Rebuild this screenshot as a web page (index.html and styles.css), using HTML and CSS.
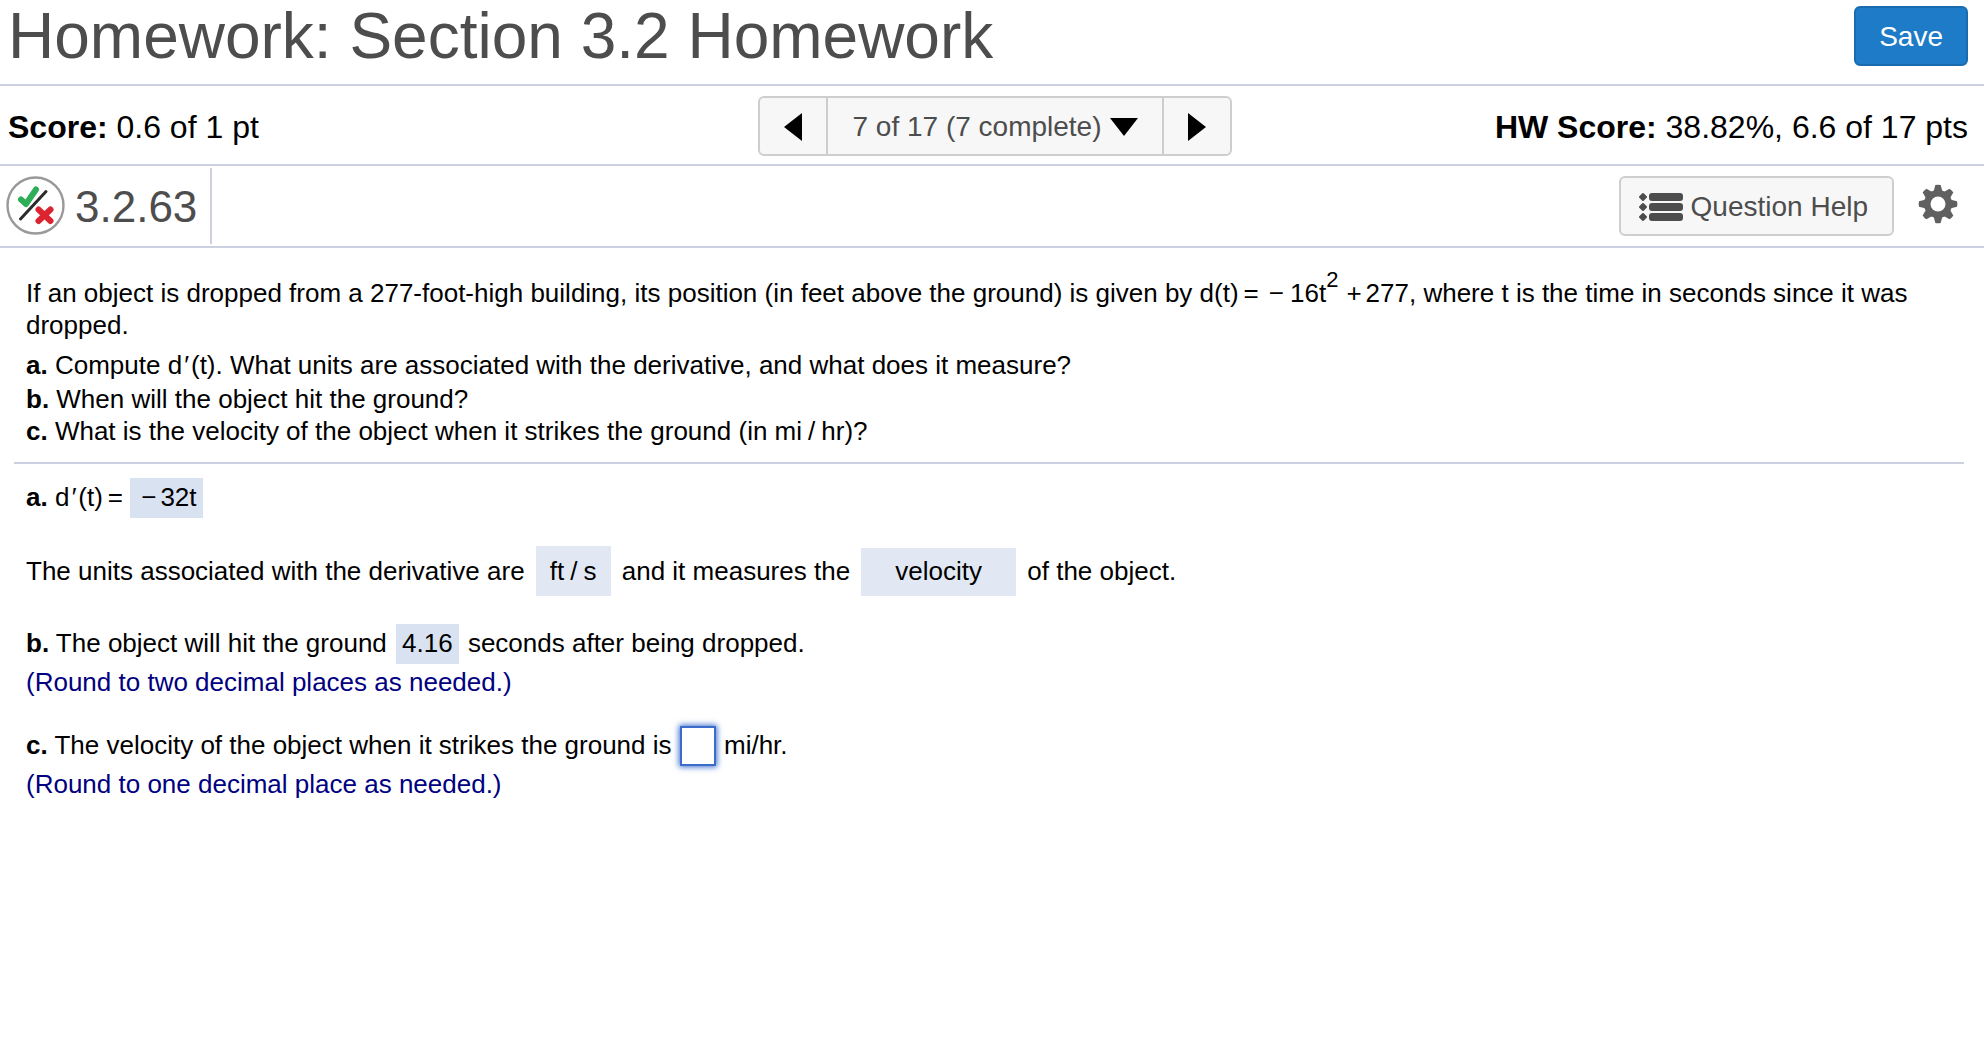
FILE: index.html
```html
<!DOCTYPE html>
<html lang="en">
<head>
<meta charset="utf-8">
<title>Homework: Section 3.2 Homework</title>
<link rel="stylesheet" href="styles.css">
</head>
<body>
<header class="title-bar">
  <h1 class="title">Homework: Section 3.2 Homework</h1>
  <button class="btn btn-save" type="button">Save</button>
</header>

<section class="score-bar">
  <div class="score"><b>Score:</b> 0.6 of 1 pt</div>
  <nav class="pager" aria-label="Questions">
    <button class="pager-btn pager-step" type="button" aria-label="Previous question">
      <svg width="18" height="28" viewBox="0 0 18 28"><path d="M18 0v28L0 14z"/></svg>
    </button>
    <button class="pager-btn pager-list" type="button" aria-haspopup="true">
      <span>7 of 17 (7 complete)</span>
      <svg width="28" height="18" viewBox="0 0 28 18"><path d="M0 0h28L14 18z"/></svg>
    </button>
    <button class="pager-btn pager-step" type="button" aria-label="Next question">
      <svg width="18" height="28" viewBox="0 0 18 28"><path d="M0 0v28l18-14z"/></svg>
    </button>
  </nav>
  <div class="score score-total"><b>HW Score:</b> 38.82%, 6.6 of 17 pts</div>
</section>

<section class="question-bar">
  <div class="question-id">
    <svg width="60" height="60" viewBox="0 0 60 60" fill="none" stroke-linecap="round" stroke-linejoin="round">
      <circle cx="29.500" cy="29.500" r="28" stroke="#999" stroke-width="2.400"/>
      <path d="M15 23.500l5 4.500L30 13.500" stroke="#2fae5a" stroke-width="6"/>
      <path d="M14.500 43L40 15.500" stroke="#2b2b2b" stroke-width="3"/>
      <path d="M32.500 33.500l12 11.500M44.500 33.500L32.500 45" stroke="#dc2430" stroke-width="6"/>
    </svg>
    <h2 class="question-number">3.2.63</h2>
  </div>
  <div class="tools">
    <button class="btn btn-help" type="button">
      <svg width="44" height="30" viewBox="0 0 44 30" fill="#4d4d4d">
        <g stroke="#4d4d4d" stroke-width="2" stroke-linejoin="round">
          <path d="M1 5l3-3 3 3-3 3zM1 15l3-3 3 3-3 3zM1 25l3-3 3 3-3 3z"/>
        </g>
        <rect x="10" y="1" width="34" height="8" rx="3"/>
        <rect x="10" y="11" width="34" height="8" rx="3"/>
        <rect x="10" y="21" width="34" height="8" rx="3"/>
      </svg>
      <span>Question Help</span>
    </button>
    <button class="gear" type="button" aria-label="Settings">
      <svg width="40" height="40" viewBox="-20 -20 40 40">
        <g fill="#606060">
          <path id="teeth" d="M-4.500-12l1.800-7Q0-19.700 2.700-19l1.800 7v24l-1.800 7Q0 19.700-2.700 19l-1.800-7z"/>
          <use href="#teeth" transform="rotate(45)"/>
          <use href="#teeth" transform="rotate(90)"/>
          <use href="#teeth" transform="rotate(135)"/>
          <circle r="14"/>
        </g>
        <circle r="7.500" fill="#fff"/>
      </svg>
    </button>
  </div>
</section>

<main class="exercise">
  <div class="prompt">
    <p>If an object is dropped from a 277-foot-high building, its position (in feet above the ground) is given by <span class="math">d(t)<span class="op-tight">=</span><span class="op-neg">−</span>16t<sup>2</sup><span class="op-plus">+</span>277</span>, where t is the time in seconds since it was dropped.</p>
    <p class="part"><b>a.</b> Compute d<span class="prime">′</span>(t). What units are associated with the derivative, and what does it measure?</p>
    <p><b>b.</b> When will the object hit the ground?</p>
    <p><b>c.</b> What is the velocity of the object when it strikes the ground (in mi<span class="slash">/</span>hr)?</p>
  </div>

  <form class="answers">
    <div class="answer">
      <p><b>a.</b> d<span class="prime">′</span>(t)<span class="op-tight">=</span> <span class="given given-a">−<span class="value">32t</span></span></p>
    </div>
    <div class="answer">
      <p>The units associated with the derivative are <span class="choice choice-unit">ft<span class="slash">/</span>s</span> and it measures the <span class="choice choice-word">velocity</span> of the object.</p>
    </div>
    <div class="answer">
      <p><b>b.</b> The object will hit the ground <span class="given given-b">4.16</span> seconds after being dropped.</p>
      <p class="hint">(Round to two decimal places as needed.)</p>
    </div>
    <div class="answer">
      <p><label for="speed"><b>c.</b> The velocity of the object when it strikes the ground is</label> <input class="blank" id="speed" type="text"> mi/hr.</p>
      <p class="hint">(Round to one decimal place as needed.)</p>
    </div>
  </form>
</main>
</body>
</html>
```
FILE: styles.css
```css
* {
  box-sizing: border-box;
}

body {
  margin: 0;
  background: #fff;
  color: #000;
  font-family: "Liberation Sans", Arial, Helvetica, sans-serif;
  font-size: 26px;
  line-height: 32px;
}

h1, h2, p {
  margin: 0;
  font-weight: normal;
}

button {
  margin: 0;
  padding: 0;
  font-family: inherit;
  font-size: 28px;
  line-height: 32px;
  cursor: pointer;
}

svg {
  display: block;
  flex: none;
}

/* Header rows */
.title-bar,
.score-bar,
.question-bar {
  border-bottom: 2px solid #ccd0e0;
}

.title-bar {
  display: flex;
  align-items: flex-start;
  justify-content: space-between;
  padding: 0 16px 12px 8px;
}

.title {
  color: #4d4d4d;
  font-size: 64px;
  line-height: 72px;
}

.btn {
  height: 60px;
  border: 2px solid #cecece;
  border-radius: 6px;
  background: #f7f7f7;
  color: #4d4d4d;
}

.btn-save {
  margin-top: 6px;
  padding: 2px 23px 0;
  border-color: #1a6cb0;
  background: #1e7bc8;
  color: #fff;
}

.score-bar {
  display: grid;
  grid-template-columns: 1fr auto 1fr;
  align-items: center;
  padding: 10px 16px 8px 8px;
}

.score {
  padding-top: 2px;
  font-size: 32px;
  line-height: 36px;
}

.score-total {
  text-align: right;
}

.pager {
  display: flex;
  height: 60px;
  margin-left: 14px;
  border: 2px solid #cecece;
  border-radius: 6px;
  background: #f7f7f7;
}

.pager-btn {
  display: flex;
  align-items: center;
  gap: 8px;
  padding: 2px 24px 0;
  border: 0;
  background: none;
  color: #4d4d4d;
}

.pager-list {
  border: solid #cecece;
  border-width: 0 2px;
}

.question-bar {
  display: flex;
  justify-content: space-between;
  padding: 2px 26px 2px 6px;
}

.question-id {
  display: flex;
  align-items: center;
  gap: 9px;
  padding-right: 13px;
  border-right: 2px solid #ccd0e0;
}

.question-number {
  padding-top: 2px;
  color: #4d4d4d;
  font-size: 44px;
  line-height: 48px;
}

.tools {
  display: flex;
  align-items: center;
  gap: 24px;
  padding: 8px 0;
}

.btn-help {
  display: flex;
  align-items: center;
  gap: 8px;
  padding: 2px 24px 0 18px;
}

.gear {
  margin-bottom: 4px;
  border: 0;
  background: none;
}

/* Exercise */
.prompt {
  margin: 0 20px 0 14px;
  padding: 29px 24px 15px 12px;
  border-bottom: 2px solid #ccd0e0;
}

.part {
  margin: 8px 0 2px;
}

.math {
  white-space: nowrap;
}

.math sup {
  font-size: 22px;
  line-height: 0;
  vertical-align: 15px;
}

.op-tight {
  margin-left: 5px;
}

.op-neg {
  margin: 0 6px 0 10px;
}

.op-plus {
  margin: 0 4px 0 8px;
}

.prime {
  margin: 0 3px 0 1px;
  font-style: italic;
}

.slash {
  margin: 0 6px;
}

.answers {
  display: flex;
  flex-direction: column;
  gap: 28px;
  padding: 14px 26px;
}

.given,
.choice {
  display: inline-block;
}

.given {
  margin: 0 2px;
  padding: 3px 6px 5px;
  background: #d9e2f1;
}

.given-a {
  margin-left: 0;
  padding-left: 11px;
}

.value {
  margin-left: 4px;
}

.choice {
  margin: 0 4px;
  padding: 9px 14px;
  background: #e1e8f3;
}

.choice-word {
  padding: 7px 34px 9px;
}

.hint {
  margin-top: 2px;
  color: #000080;
}

.blank {
  width: 36px;
  height: 40px;
  margin: 0 1px;
  padding: 1px 4px 3px;
  border: 2px solid #3b6ccb;
  box-shadow: 0 0 6px 1px #3b6ccb;
  outline: 0;
  font: inherit;
}
```
